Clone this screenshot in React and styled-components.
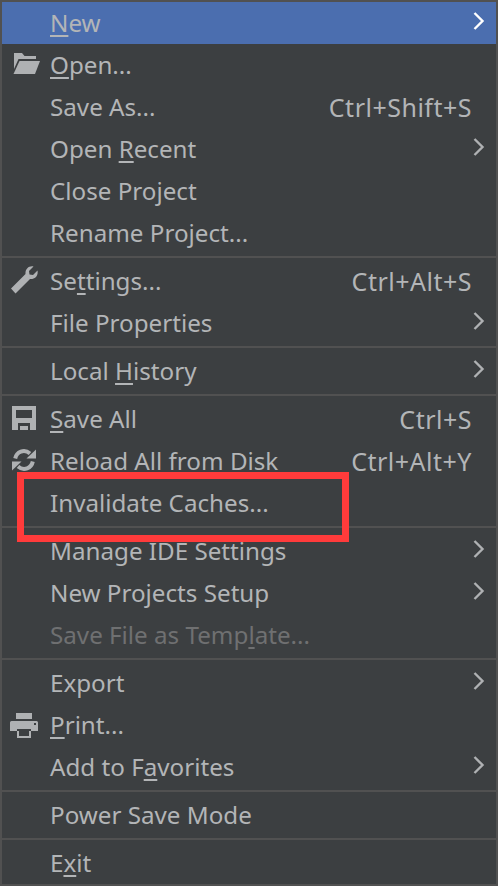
import React from "react";
import styled, { createGlobalStyle } from "styled-components";

const Global = createGlobalStyle`
  html, body { margin: 0; padding: 0; background: #515151; }
  #root { width: 498px; height: 886px; }
`;

const Frame = styled.div`
  position: relative;
  box-sizing: border-box;
  width: 498px;
  height: 886px;
  padding: 2px;
  background: #3c3f41;
  outline: 2px solid #515151;
  outline-offset: -2px;
  font-family: "Noto Sans", "Open Sans", sans-serif;
  font-size: 24.2px;
  color: #b3b5b7;
`;

const Separator = styled.div`
  height: 6px;
  display: flex;
  align-items: center;
  &::before {
    content: "";
    flex: 1;
    height: 2px;
    background: #515151;
  }
`;

const Row = styled.div`
  height: 42px;
  display: grid;
  grid-template-columns: 48px 1fr auto 24px;
  align-items: center;
  background: ${(p) => (p.$active ? "#4b6eaf" : "transparent")};
  color: ${(p) => (p.$disabled ? "#6f7071" : "inherit")};
  white-space: nowrap;
`;

const IconCell = styled.span`
  display: flex;
  justify-content: center;
  align-items: center;
  height: 42px;
  padding-right: 4px;
  box-sizing: border-box;
  color: #afb1b3;
  svg { display: block; }
`;

const Label = styled.span`
  line-height: 40px;
`;

const Key = styled.u`
  text-decoration-thickness: 2px;
  text-underline-offset: 3px;
  text-decoration-skip-ink: none;
`;

const Shortcut = styled.span`
  line-height: 40px;
  text-align: right;
  font-size: 25px;
  letter-spacing: 0.5px;
`;

const ArrowCell = styled.span`
  display: flex;
  margin-bottom: 4px;
  padding-left: 1px;
  color: ${(p) => (p.$active ? "#ffffff" : "#afb1b3")};
`;

const Callout = styled.div`
  position: absolute;
  left: 17px;
  top: 472px;
  width: 332px;
  height: 70px;
  box-sizing: border-box;
  border: 7px solid #ff3b3b;
`;

const Chevron = () => (
  <svg width="12" height="18" viewBox="0 0 12 18" fill="none" stroke="currentColor" strokeWidth="2.4">
    <path d="M1.5 1 L9.5 9 L1.5 17" />
  </svg>
);

const FolderIcon = () => (
  <svg width="28" height="21" viewBox="0 0 28 21" fill="currentColor" style={{ marginBottom: 3, marginLeft: 4 }}>
    <path d="M2 0 H10 L12.5 3 H24 V6 H6.5 L2 16 Z" />
    <path d="M7.5 8 H28 L23 21 H1.5 Z" />
  </svg>
);

const WrenchIcon = () => (
  <svg width="28" height="28" viewBox="0 0 28 28" fill="currentColor" style={{ marginBottom: 3 }}>
    <path d="M23.5 0.5 C19 -0.5 15 3 15.5 8 L1 22.5 L5.5 27.5 L20 13 C25 13.5 28.5 9.5 27.5 4.5 L23 9 L19.5 8.5 L19 5 Z" />
  </svg>
);

const SaveIcon = () => (
  <svg width="24" height="24" viewBox="0 0 24 24" fill="currentColor" fillRule="evenodd" style={{ marginBottom: 2 }}>
    <path d="M0 0 H24 V24 H0 Z M4 4 V12 H20 V4 Z M6 17 V24 H18 V17 Z" />
    <path d="M8 20 H16 V24 H8 Z" />
  </svg>
);

const ReloadIcon = () => (
  <svg width="24" height="24" viewBox="0 0 24 24" fill="none" stroke="currentColor" strokeWidth="4" style={{ marginBottom: 2 }}>
    <path d="M3.2 10.5 C4.5 4 12 0.5 18 5.5" />
    <path d="M20.8 13.5 C19.5 20 12 23.5 6 18.5" />
    <path d="M14.5 10.5 H24 V1.5 Z" fill="currentColor" stroke="none" />
    <path d="M9.5 13.5 H0 V22.5 Z" fill="currentColor" stroke="none" />
  </svg>
);

const PrintIcon = () => (
  <svg width="28" height="25" viewBox="0 0 28 25" fill="currentColor" fillRule="evenodd">
    <path d="M6 0 H22 V6 H6 Z" />
    <path d="M1.5 8 H26.5 Q28 8 28 9.5 V18 H21 V16 H7 V18 H0 V9.5 Q0 8 1.5 8 Z M24 10 V12 H26 V10 Z" />
    <path d="M7 18 H21 V25 H7 Z M9 18 V23 H19 V18 Z" />
  </svg>
);

const groups = [
  [
    { label: <><Key>N</Key>ew</>, arrow: true, active: true },
    { label: <><Key>O</Key>pen...</>, icon: <FolderIcon /> },
    { label: "Save As...", shortcut: "Ctrl+Shift+S" },
    { label: <>Open <Key>R</Key>ecent</>, arrow: true },
    { label: "Close Project" },
    { label: "Rename Project..." },
  ],
  [
    { label: <>Se<Key>t</Key>tings...</>, icon: <WrenchIcon />, shortcut: "Ctrl+Alt+S" },
    { label: "File Properties", arrow: true },
  ],
  [{ label: <>Local <Key>H</Key>istory</>, arrow: true }],
  [
    { label: <><Key>S</Key>ave All</>, icon: <SaveIcon />, shortcut: "Ctrl+S" },
    { label: "Reload All from Disk", icon: <ReloadIcon />, shortcut: "Ctrl+Alt+Y" },
    { label: "Invalidate Caches..." },
  ],
  [
    { label: "Manage IDE Settings", arrow: true },
    { label: "New Projects Setup", arrow: true },
    { label: <>Save File as Temp<Key>l</Key>ate...</>, disabled: true },
  ],
  [
    { label: "Export", arrow: true },
    { label: <><Key>P</Key>rint...</>, icon: <PrintIcon /> },
    { label: <>Add to F<Key>a</Key>vorites</>, arrow: true },
  ],
  [{ label: "Power Save Mode" }],
  [{ label: <>E<Key>x</Key>it</> }],
];

export default function App() {
  return (
    <>
      <Global />
      <Frame>
        {groups.map((items, g) => (
          <React.Fragment key={g}>
            {g > 0 && <Separator />}
            {items.map((item, i) => (
              <Row key={i} $active={item.active} $disabled={item.disabled}>
                <IconCell>{item.icon}</IconCell>
                <Label>{item.label}</Label>
                <Shortcut>{item.shortcut}</Shortcut>
                <ArrowCell $active={item.active}>{item.arrow && <Chevron />}</ArrowCell>
              </Row>
            ))}
          </React.Fragment>
        ))}
        <Callout />
      </Frame>
    </>
  );
}
